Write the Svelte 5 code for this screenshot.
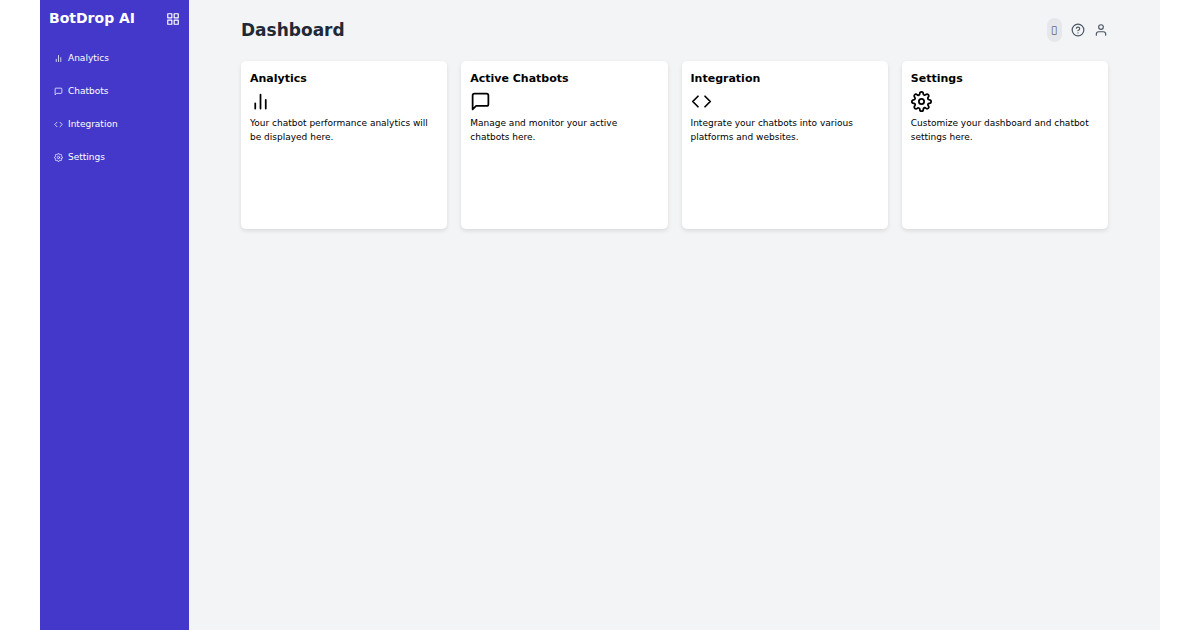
<script lang="ts">
	type IconName = 'analytics' | 'chat' | 'code' | 'settings' | 'grid' | 'help' | 'user';

	const navItems: { label: string; icon: IconName }[] = [
		{ label: 'Analytics', icon: 'analytics' },
		{ label: 'Chatbots', icon: 'chat' },
		{ label: 'Integration', icon: 'code' },
		{ label: 'Settings', icon: 'settings' }
	];

	const cards: { title: string; icon: IconName; text: string }[] = [
		{
			title: 'Analytics',
			icon: 'analytics',
			text: 'Your chatbot performance analytics will be displayed here.'
		},
		{
			title: 'Active Chatbots',
			icon: 'chat',
			text: 'Manage and monitor your active chatbots here.'
		},
		{
			title: 'Integration',
			icon: 'code',
			text: 'Integrate your chatbots into various platforms and websites.'
		},
		{
			title: 'Settings',
			icon: 'settings',
			text: 'Customize your dashboard and chatbot settings here.'
		}
	];
</script>

{#snippet icon(name: IconName)}
	<svg viewBox="0 0 24 24" aria-hidden="true">
		{#if name === 'analytics'}
			<path d="M18 20V10M12 20V4M6 20v-6" />
		{:else if name === 'chat'}
			<path d="M21 15a2 2 0 0 1-2 2H7l-4 4V5a2 2 0 0 1 2-2h14a2 2 0 0 1 2 2z" />
		{:else if name === 'code'}
			<path d="M16 18l6-6-6-6M8 6l-6 6 6 6" />
		{:else if name === 'settings'}
			<circle cx="12" cy="12" r="3" />
			<path d="M19.4 15a1.65 1.65 0 0 0 .33 1.82l.06.06a2 2 0 0 1 0 2.83 2 2 0 0 1-2.83 0l-.06-.06a1.65 1.65 0 0 0-1.82-.33 1.65 1.65 0 0 0-1 1.51V21a2 2 0 0 1-2 2 2 2 0 0 1-2-2v-.09A1.65 1.65 0 0 0 9 19.4a1.65 1.65 0 0 0-1.82.33l-.06.06a2 2 0 0 1-2.83 0 2 2 0 0 1 0-2.83l.06-.06a1.65 1.65 0 0 0 .33-1.82 1.65 1.65 0 0 0-1.51-1H3a2 2 0 0 1-2-2 2 2 0 0 1 2-2h.09A1.65 1.65 0 0 0 4.6 9a1.65 1.65 0 0 0-.33-1.82l-.06-.06a2 2 0 0 1 0-2.83 2 2 0 0 1 2.83 0l.06.06a1.65 1.65 0 0 0 1.82.33H9a1.65 1.65 0 0 0 1-1.51V3a2 2 0 0 1 2-2 2 2 0 0 1 2 2v.09a1.65 1.65 0 0 0 1 1.51 1.65 1.65 0 0 0 1.82-.33l.06-.06a2 2 0 0 1 2.83 0 2 2 0 0 1 0 2.83l-.06.06a1.65 1.65 0 0 0-.33 1.82V9a1.65 1.65 0 0 0 1.51 1H21a2 2 0 0 1 2 2 2 2 0 0 1-2 2h-.09a1.65 1.65 0 0 0-1.51 1z" />
		{:else if name === 'grid'}
			<path d="M3 3h7v7H3zM14 3h7v7h-7zM14 14h7v7h-7zM3 14h7v7H3z" />
		{:else if name === 'help'}
			<circle cx="12" cy="12" r="10" />
			<path d="M9.09 9a3 3 0 0 1 5.83 1c0 2-3 3-3 3M12 17h.01" />
		{:else}
			<path d="M20 21v-2a4 4 0 0 0-4-4H8a4 4 0 0 0-4 4v2" />
			<circle cx="12" cy="7" r="4" />
		{/if}
	</svg>
{/snippet}

<div class="app">
	<aside class="sidebar">
		<div class="brand">
			<h2>BotDrop AI</h2>
			<button class="icon-btn" aria-label="Toggle menu">{@render icon('grid')}</button>
		</div>
		<nav>
			{#each navItems as item}
				<a href="#{item.label.toLowerCase()}">
					{@render icon(item.icon)}
					<span>{item.label}</span>
				</a>
			{/each}
		</nav>
	</aside>

	<main>
		<header>
			<h1>Dashboard</h1>
			<div class="actions">
				<button class="theme-btn" aria-label="Toggle theme">&#xf186;</button>
				<button class="icon-btn" aria-label="Help">{@render icon('help')}</button>
				<button class="icon-btn" aria-label="Account">{@render icon('user')}</button>
			</div>
		</header>

		<div class="cards">
			{#each cards as card}
				<section class="card">
					<h3>{card.title}</h3>
					{@render icon(card.icon)}
					<p>{card.text}</p>
				</section>
			{/each}
		</div>
	</main>
</div>

<style>
	:global(body) {
		margin: 0;
		background: #fff;
	}

	.app {
		display: flex;
		min-height: 100vh;
		margin: 0 40px;
		background: #f3f4f6;
		font-family: 'DejaVu Sans', sans-serif;
		font-size: 9px;
		line-height: 14px;
		color: #000;
	}

	h1,
	h2,
	h3,
	p {
		margin: 0;
	}

	svg {
		display: block;
		flex: none;
		fill: none;
		stroke: currentColor;
		stroke-width: 2;
		stroke-linecap: round;
		stroke-linejoin: round;
	}

	button {
		padding: 0;
		border: none;
		background: none;
		color: inherit;
		font: inherit;
		cursor: pointer;
	}

	.icon-btn svg {
		width: 14px;
		height: 14px;
	}

	.sidebar {
		flex: none;
		width: 149px;
		background: #4338ca;
		color: #fff;
	}

	.brand {
		display: flex;
		align-items: center;
		justify-content: space-between;
		padding: 9px;
	}

	.brand h2 {
		font-size: 14px;
		line-height: 19px;
	}

	nav {
		display: flex;
		flex-direction: column;
		gap: 5px;
		padding: 7px 5px;
	}

	nav a {
		display: flex;
		align-items: center;
		gap: 5px;
		padding: 7px 9px;
		border-radius: 4px;
		color: #fff;
		text-decoration: none;
	}

	nav a:hover {
		background: #4f46e5;
	}

	nav svg {
		width: 9px;
		height: 9px;
	}

	main {
		flex: 1;
		min-width: 0;
		padding: 18px 52px;
	}

	header {
		display: flex;
		align-items: center;
		justify-content: space-between;
		margin-bottom: 19px;
	}

	h1 {
		font-size: 17px;
		line-height: 23px;
		color: #1f2937;
	}

	.actions {
		display: flex;
		align-items: center;
		gap: 9px;
		color: #4b5563;
	}

	.theme-btn {
		padding: 5px;
		border-radius: 12px;
		background: #e5e7eb;
		color: #1f2937;
	}

	.cards {
		display: grid;
		grid-template-columns: repeat(4, 1fr);
		gap: 14px;
	}

	.card {
		box-sizing: border-box;
		min-height: 168px;
		padding: 10px 9px;
		border-radius: 5px;
		background: #fff;
		box-shadow: 0 2px 4px rgba(0, 0, 0, 0.1);
	}

	.card h3 {
		margin-bottom: 4px;
		font-size: 11px;
		line-height: 16px;
	}

	.card svg {
		width: 21px;
		height: 21px;
		margin-bottom: 4px;
	}
</style>
